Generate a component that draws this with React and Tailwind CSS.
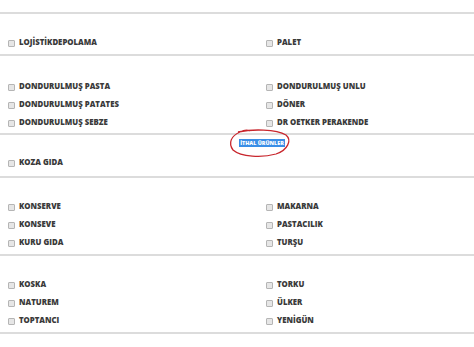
import React from 'react';

const sections = [
  { title: '', head: 'h-[20px]', pad: 'pb-[2px]', left: ['LOJİSTİKDEPOLAMA'], right: ['PALET'] },
  {
    title: '',
    head: 'h-[22px]',
    pad: 'pb-[1px]',
    left: ['DONDURULMUŞ PASTA', 'DONDURULMUŞ PATATES', 'DONDURULMUŞ SEBZE'],
    right: ['DONDURULMUŞ UNLU', 'DÖNER', 'DR OETKER PERAKENDE'],
  },
  { title: 'İTHAL ÜRÜNLER', head: 'h-[19px]', pad: 'pb-[4px]', left: ['KOZA GIDA'], right: [] },
  {
    title: '',
    head: 'h-[20px]',
    pad: 'pb-[2px]',
    left: ['KONSERVE', 'KONSEVE', 'KURU GIDA'],
    right: ['MAKARNA', 'PASTACILIK', 'TURŞU'],
  },
  {
    title: '',
    head: 'h-[20px]',
    pad: 'pb-[2px]',
    left: ['KOSKA', 'NATUREM', 'TOPTANCI'],
    right: ['TORKU', 'ÜLKER', 'YENİGÜN'],
  },
];

const Item = ({ label }) => (
  <label className="flex items-center h-[18px] gap-[4px] text-[7.8px] font-extrabold text-[#3a3a3a]">
    <span className="w-[7px] h-[7px] border border-[#b5b5b5] bg-[#e6e6e6] rounded-[1px]" />
    {label}
  </label>
);

const Section = ({ title, head, pad, left, right }) => (
  <div className={`relative border-b-2 border-[#dcdcdc] ${pad}`}>
    <div className={`${head} flex justify-center pt-[4px] pl-[50px]`}>
      {title && (
        <div className="relative h-[8px]">
          <span className="block bg-[#3a8ee6] text-white text-[5.4px] font-extrabold leading-[8px] px-[1px]">
            {title}
          </span>
          <svg
            className="absolute left-[-11px] top-[-11px]"
            width="64"
            height="30"
            viewBox="0 0 64 30"
          >
            <path
              d="M10 4 C24 1 48 1 58 7 C64 12 60 22 48 26 C34 30 13 29 5 22 C0 15 3 8 12 4 C16 2 20 2 22 3"
              fill="none"
              stroke="#c8262d"
              strokeWidth="1.3"
            />
          </svg>
        </div>
      )}
    </div>
    <div className="grid grid-cols-[258px_1fr] pl-[8px]">
      <div>
        {left.map((l) => (
          <Item key={l} label={l} />
        ))}
      </div>
      <div>
        {right.map((r) => (
          <Item key={r} label={r} />
        ))}
      </div>
    </div>
  </div>
);

export default function App() {
  return (
    <div className="w-[474px] h-[347px] bg-white overflow-hidden" style={{ fontFamily: '"Open Sans", "Liberation Sans", sans-serif' }}>
      <div className="h-[14px] border-b-2 border-[#dcdcdc]" />
      {sections.map((s, i) => (
        <Section key={i} {...s} />
      ))}
    </div>
  );
}
